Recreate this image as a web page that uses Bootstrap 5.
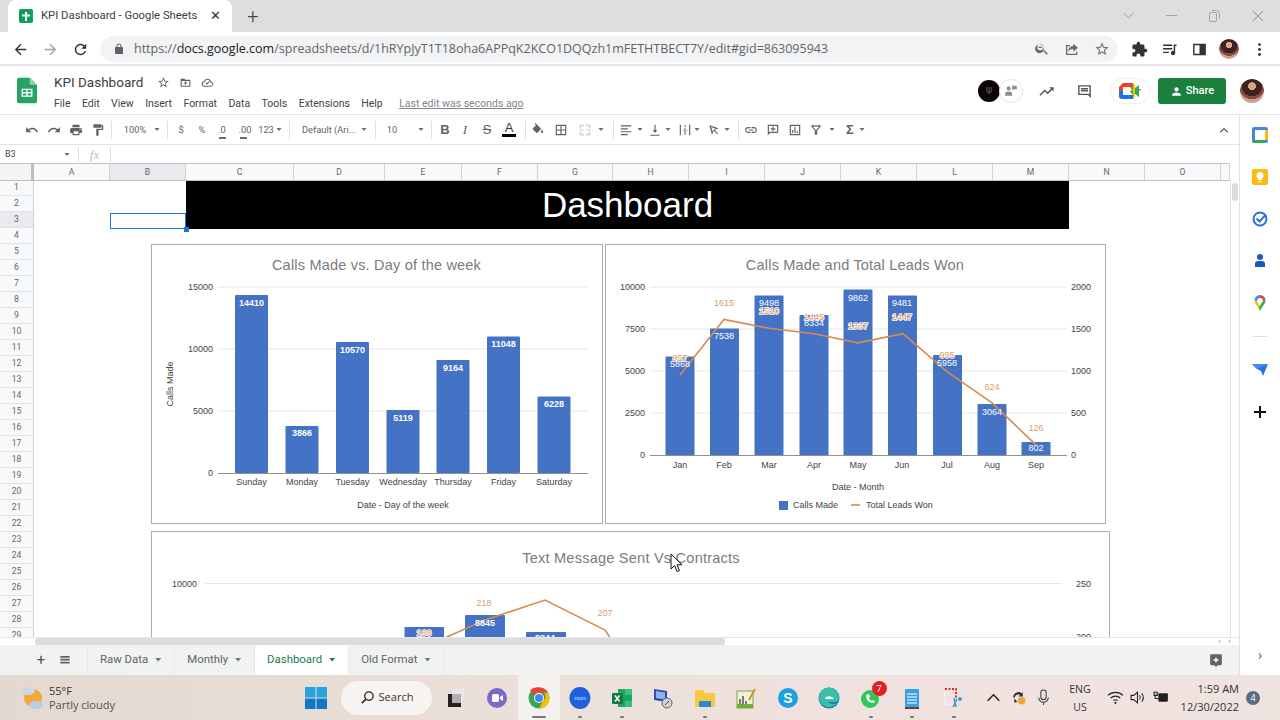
<!DOCTYPE html>
<html lang="en">
<head>
<meta charset="utf-8">
<title>KPI Dashboard - Google Sheets</title>
<link href="https://cdn.jsdelivr.net/npm/bootstrap@5.3.0/dist/css/bootstrap.min.css" rel="stylesheet">
<style>
html,body{height:720px;width:1280px;overflow:hidden;margin:0}
body{font-family:Roboto,"Liberation Sans",sans-serif;font-size:11px;color:#444;background:#fff;display:flex;flex-direction:column}
.defs-hold{width:0;height:0;position:absolute}
.ic{width:14px;height:14px;fill:#5f6368;flex:none}
.strip{height:32px;background:#dedede;flex:none}
.chrome-tab{width:224px;height:32px;margin-left:8px;background:#fff;border-radius:8px 8px 0 0;font-family:Roboto,"Liberation Sans",sans-serif;font-size:11.3px;color:#3c4043;padding-left:11px}
.tab-title{margin-left:8px;white-space:nowrap}
.tab-x{margin-left:auto;margin-right:11px;font-size:13px;color:#333}
.new-tab{width:42px;font-size:20px;font-weight:300;color:#444;text-align:center;line-height:1}
.winbar{padding-right:1px}
.winbtn{width:43px;color:#9a9a9a;text-align:center}
.addr{height:34px;flex:none;background:#fff;border-bottom:2px solid #e3e5e8;padding-top:2px}
.navs{padding-left:5px}
.navbtn{width:30px;display:flex;justify-content:center}
.navbtn .ic,.extbtn .ic{width:17px;height:17px;fill:#333}
.navbtn .fwd{fill:#a0a4a8}
.omni{width:1018px;margin-left:5px;height:26px;background:#f1f3f4;border-radius:13px;padding:0 8px 0 13px;font-family:"Open Sans","Liberation Sans",sans-serif;font-size:12.5px;color:#60646a}
.omni b{font-weight:400;color:#202124}
.omni .ic{width:12px;height:12px}
.url{margin-left:9px;white-space:nowrap}
.omni-ics{margin-left:auto;gap:14px;display:flex}
.omni-ics .ic{width:16px;height:16px;fill:#6a6e73}
.exts{margin-left:6px}
.extbtn{width:30px;display:flex;justify-content:center}
.ava{width:20px;height:20px;border-radius:50%;background:radial-gradient(circle at 50% 30%,#d9a58b 0 18%,#3b2320 20% 48%,#8d4b3e 50% 62%,#caa08f 64%)}
.ava-l{width:24px;height:24px}
.sh-head{height:49px;flex:none;border-bottom:1px solid #e4e6e8;position:relative}
.sh-logo{width:20px;height:27px;margin-left:17px;margin-top:11px;flex:none}
.sh-mid{margin-left:17px;margin-top:6px}
.sh-title{font-size:13.5px;color:#3c4043;line-height:20px;white-space:nowrap}
.sh-title .ic{width:13px;height:13px;margin-left:9px}
.sh-title .first{margin-left:14px}
.sh-menu{gap:11.4px;margin-top:5px;line-height:14px;font-size:10.5px;white-space:nowrap}
.lastedit{margin-left:5px;color:#80868b;text-decoration:underline}
.sh-right{margin-left:auto;padding-right:16px;padding-top:2px}
.pic-a{width:22px;height:22px;border-radius:50%;background:#0c0505;color:#665;font-size:9px;text-align:center;line-height:22px}
.pic-b{width:24px;height:24px;border-radius:50%;background:#fff;border:1px solid #e3e3e3;margin-left:-1px;display:flex;align-items:center;justify-content:center}
.pic-b svg{width:14px;height:14px;fill:#8c8c8c}
.trend{margin-left:15px}
.hd-ic{width:17px;height:17px;fill:#555}
.cmt{margin-left:21px}
.meet{width:40px;height:26px;border-radius:13px;border:1px solid #eceff1;margin-left:17px;display:flex;align-items:center;justify-content:center}
.btn.share{background:#1b7f3e;border:0;color:#fff;height:26px;width:68px;padding:0;margin-left:8px;font-size:11px;font-weight:500;border-radius:3px}
.btn.share .ic{width:13px;height:13px;fill:#fff;margin-right:3px}
.ava-r{margin-left:14px}
.work{height:560px;flex:none}
.work-l{width:1239px;display:flex;flex-direction:column}
.side{width:41px;border-left:1px solid #e2e3e5;padding-top:12px;gap:26px;display:flex;flex-direction:column;align-items:center}
.side svg{width:16px;height:16px;flex:none}
.side-sep{width:14px;height:1px;background:#dadce0;margin:-1px 0}
.side-next{margin-top:auto;margin-bottom:13px;color:#5f6368;font-size:14px;line-height:14px}
.tools{height:30px;flex:none;border-bottom:1px solid #e2e3e5;padding-left:25px;font-size:9.3px;color:#5f6368}
.tools .ic{display:block}
.tt{flex:none;text-align:center;white-space:nowrap}
.w8{width:8px}.w10{width:10px}.w12{width:12px}.w16{width:16px}.w24{width:24px}.w56{width:56px}
.tc{width:8px;height:4px;flex:none;background:#6a6e73;clip-path:polygon(1px 0,7px 0,4px 3.5px)}
.ts{width:1px;height:18px;background:#dfe1e3;flex:none}
.dec{position:relative}
.dec::after{content:"";position:absolute;left:3px;bottom:-3px;width:7px;height:2px;background:#6a6e73}
.tb-l{font-family:"Liberation Serif",serif;font-size:13px;font-weight:700;color:#5f6368;width:14px;text-align:center;flex:none;line-height:14px}
.t-b{font-family:"Liberation Sans",sans-serif}
.t-i{font-style:italic;font-weight:400}
.t-s{text-decoration:line-through;font-weight:400;font-family:"Liberation Sans",sans-serif}
.t-a{font-family:"Liberation Sans",sans-serif;font-weight:400;border-bottom:3px solid #000;line-height:11px;height:15px;color:#333}
.dim{fill:#c4c7ca}
.m1{margin-left:1px}.m2{margin-left:2px}.m3{margin-left:3px}.m4{margin-left:4px}.m5{margin-left:5px}.m6{margin-left:6px}.m7{margin-left:7px}.m8{margin-left:8px}.m9{margin-left:9px}.m10{margin-left:10px}.m11{margin-left:11px}.m12{margin-left:12px}.m19{margin-left:19px}
.collapse-ic{margin-left:auto;margin-right:8px}
.fx-bar{height:18px;flex:none;font-size:9px;color:#444;padding-top:1px}
.nm{width:79px;padding-left:5px;display:flex;align-items:center;justify-content:space-between;padding-right:7px;border-right:1px solid #dadce0;height:14px}
.fx{width:32px;font-family:"Liberation Serif",serif;font-style:italic;font-size:13px;color:#c0c2c4;text-align:center;border-right:1px solid #dadce0;height:14px;line-height:13px}
.cols{height:18px;flex:none;display:grid;grid-template-columns:34px 76px 76px 108px 91px 77px 76px 75px repeat(8,76px) 9px;background:#f8f9fa;border-top:1px solid #c4c7c5;border-bottom:1px solid #c0c0c0;width:1230px;font-size:8.6px;color:#666}
.cols>div{border-right:1px solid #cfd1d3;text-align:center;line-height:16px}
.cols>.corner{border-right:3px solid #bdbdbd;background:#f3f4f5}
.cols>.cur{background:#e8eaed}
.sheet-wrap{height:456px;flex:none}
.rownums{width:34px;flex:none;background:#f8f9fa;border-right:1px solid #cfd1d3;overflow:hidden;font-size:8.6px;color:#666;display:flex;flex-direction:column}
.rownums div{height:16px;flex:none;text-align:center;line-height:14px;border-bottom:1px solid #e1e3e5}
.rownums div:first-child{margin-top:-1px}
.rownums .cur{background:#e8eaed}
.canvas{width:1196px;flex:none;position:relative;overflow:hidden;background:#fff}
.vscroll{width:9px;flex:none;background:#fff;border-left:1px solid #e1e3e5;padding:2px 1px}
.vthumb{height:18px;background:#dadce0;border-radius:3px}
.banner{position:absolute;left:152px;top:0;width:883px;height:48px;background:#000;color:#fff;font-family:"Liberation Sans",sans-serif;font-size:35px;text-align:center;line-height:47px}
.sel{position:absolute;left:76px;top:32px;width:76px;height:16px;border:1px solid #1a73e8}
.sel-h{position:absolute;left:150px;top:46px;width:5px;height:5px;background:#1a73e8}
.obj{position:absolute;font-family:"Liberation Sans",sans-serif}
.obj1{left:117px;top:63px;width:452px;height:280px}
.obj2{left:571px;top:63px;width:501px;height:280px}
.obj3{left:117px;top:350px;width:960px;height:280px}
.frame{fill:#fff;stroke:#aeaeae}
.ct{font-size:14.5px;fill:#7b7b7b;text-anchor:middle;letter-spacing:.2px}
.ctl{font-size:14.6px}
.ax{font-size:9px;fill:#444}
.axm{text-anchor:middle}
.axe{text-anchor:end}
.vl{font-size:9px;font-weight:700;fill:#fff;text-anchor:middle}
.val-thin{font-weight:400}
.vo{font-size:9px;fill:#e29a5f;text-anchor:middle}
.hl{paint-order:stroke;stroke:#fff;stroke-width:1.6px}
.gl{stroke:#e6e7e9;stroke-width:1}
.base{stroke:#8f8f8f;stroke-width:1}
.bar{fill:#4472c4}
.ln{fill:none;stroke:#d88b4f;stroke-width:1.6}
.cursor{position:absolute;left:636px;top:372px;width:13px;height:20px}
.hbar{height:8px;flex:none;background:#fff;border-top:1px solid #e6e7e8;width:1239px}
.hthumb{width:690px;margin-left:35px;height:7px;background:#dadce0;border-radius:3px}
.harr{margin-left:auto;font-size:8px;color:#777;line-height:7px;padding-right:8px;gap:8px;display:flex}
.tabsbar{height:30px;flex:none;background:#f1f3f3;font-size:11.4px;color:#5f6368}
.plus{width:14px;margin-left:34px;font-size:15px;color:#555;text-align:center;line-height:1}
.allsheets{margin-left:10px;margin-right:15px}
.stab{height:30px;display:flex;align-items:center;gap:6px;padding:0 12px;border-right:1px solid #e7e9e9;white-space:nowrap}
.stab .tc{background:#777}
.stab-on{background:#fff;color:#1b7f4e}
.stab-on .tc{background:#1b7f4e}
.rawtab{border-left:1px solid #e7e9e9}
.explore{margin-left:auto;margin-right:16px}
.taskbar{height:45px;flex:none;background:linear-gradient(90deg,#e3d9d0 0,#ebe1da 45%,#f1e2df 70%,#efe3e0 100%);font-family:"Open Sans","Liberation Sans",sans-serif;font-size:11px;color:#333}
.wx{width:305px;padding-left:19px;gap:5px;flex:none}
.wx svg{width:25px;height:28px}
.wx p{margin:0;line-height:14px}
.wx .muted{color:#555}
.start{width:22px;height:22px;flex:none}
.srch{width:91px;height:34px;margin-left:14px;margin-right:3px;background:#f8f4f1;border-radius:17px;gap:4px;font-size:11px;justify-content:center}
.srch svg{width:15px;height:15px}
.tbi{width:41.5px;height:45px;flex:none;position:relative;display:flex;align-items:center;justify-content:center}
.tbi svg{width:22px;height:22px}
.run::after{content:"";position:absolute;bottom:2px;left:50%;margin-left:-2px;width:4px;height:2px;border-radius:1px;background:#777}
.active-app{background:#f5f1ee;border-radius:3px}
.active-app::after{margin-left:-7px;width:14px}
.bdg{position:absolute;top:6px;right:5px;width:15px;height:15px;border-radius:50%;background:#e01f26;color:#fff;font-size:9.5px;line-height:15px;text-align:center}
.tray{margin-left:auto;gap:0;padding-right:20px}
.tr-i{flex:none;display:flex;justify-content:center}
.tr-i svg{width:17px;height:17px}
.spk{margin-left:5px}
.bat{margin-left:7px}
.lang{width:36px;text-align:center;line-height:18px;font-size:10.6px;margin-left:10px;margin-right:9px}
.clock{width:60px;text-align:right;line-height:18px;font-size:11px;margin-left:9px;white-space:nowrap}
.notif{width:14px;height:14px;border-radius:50%;background:#5b6d7e;color:#fff;font-size:9px;text-align:center;line-height:14px;margin-left:7px;flex:none}
</style>
</head>
<body>
<svg class="defs-hold" aria-hidden="true">
<symbol id="i-back" viewBox="0 0 24 24"><path d="M20 11H7.830l5.590-5.590L12 4l-8 8 8 8 1.410-1.410L7.830 13H20v-2z"/></symbol>
<symbol id="i-reload" viewBox="0 0 24 24"><path d="M17.650 6.350C16.200 4.900 14.210 4 12 4c-4.420 0-7.990 3.580-7.990 8s3.570 8 7.990 8c3.730 0 6.840-2.550 7.730-6h-2.080c-.82 2.330-3.040 4-5.650 4-3.310 0-6-2.690-6-6s2.690-6 6-6c1.660 0 3.140.69 4.220 1.780L13 11h7V4l-2.350 2.350z"/></symbol>
<symbol id="i-lock" viewBox="0 0 24 24"><path d="M18 8h-1V6c0-2.760-2.240-5-5-5S7 3.240 7 6v2H6c-1.100 0-2 .9-2 2v10c0 1.100.9 2 2 2h12c1.100 0 2-.9 2-2V10c0-1.100-.9-2-2-2zM9 6c0-1.660 1.340-3 3-3s3 1.340 3 3v2H9V6z"/></symbol>
<symbol id="i-star" viewBox="0 0 24 24"><path d="M22 9.240l-7.190-.62L12 2 9.190 8.630 2 9.240l5.460 4.730L5.820 21 12 17.270 18.180 21l-1.630-7.030L22 9.240zM12 15.400l-3.760 2.270 1-4.280-3.320-2.880 4.380-.38L12 6.100l1.710 4.040 4.380.38-3.320 2.880 1 4.280L12 15.400z"/></symbol>
<symbol id="i-ext" viewBox="0 0 24 24"><path d="M20.500 11H19V7c0-1.100-.9-2-2-2h-4V3.500C13 2.120 11.880 1 10.500 1S8 2.120 8 3.500V5H4c-1.100 0-1.990.9-1.990 2v3.800H3.500c1.490 0 2.700 1.210 2.700 2.700s-1.210 2.700-2.700 2.700H2V20c0 1.100.9 2 2 2h3.800v-1.500c0-1.490 1.210-2.700 2.700-2.700 1.490 0 2.700 1.210 2.700 2.700V22H17c1.100 0 2-.9 2-2v-4h1.500c1.380 0 2.500-1.120 2.500-2.500S21.880 11 20.500 11z"/></symbol>
<symbol id="i-undo" viewBox="0 0 24 24"><path d="M12.500 8c-2.650 0-5.050.99-6.900 2.600L2 7v9h9l-3.620-3.620c1.390-1.160 3.160-1.880 5.120-1.880 3.540 0 6.550 2.310 7.600 5.500l2.370-.78C21.080 11.030 17.150 8 12.500 8z"/></symbol>
<symbol id="i-redo" viewBox="0 0 24 24"><path d="M18.400 10.600C16.550 8.990 14.150 8 11.500 8c-4.650 0-8.580 3.030-9.960 7.220L3.900 16c1.050-3.190 4.050-5.500 7.600-5.500 1.950 0 3.730.72 5.120 1.880L13 16h9V7l-3.600 3.600z"/></symbol>
<symbol id="i-print" viewBox="0 0 24 24"><path d="M19 8H5c-1.660 0-3 1.340-3 3v6h4v4h12v-4h4v-6c0-1.660-1.340-3-3-3zm-3 11H8v-5h8v5zm3-7c-.55 0-1-.45-1-1s.45-1 1-1 1 .45 1 1-.45 1-1 1zm-1-9H6v4h12V3z"/></symbol>
<symbol id="i-paint" viewBox="0 0 24 24"><path d="M18 4V3c0-.55-.45-1-1-1H5c-.55 0-1 .45-1 1v4c0 .55.45 1 1 1h12c.55 0 1-.45 1-1V6h1v4H9v11c0 .55.45 1 1 1h2c.55 0 1-.45 1-1v-9h8V4h-3z"/></symbol>
<symbol id="i-link" viewBox="0 0 24 24"><path d="M3.900 12c0-1.710 1.390-3.100 3.100-3.100h4V7H7c-2.760 0-5 2.240-5 5s2.240 5 5 5h4v-1.900H7c-1.710 0-3.100-1.390-3.100-3.100zM8 13h8v-2H8v2zm9-6h-4v1.900h4c1.710 0 3.100 1.390 3.100 3.100s-1.390 3.100-3.100 3.100h-4V17h4c2.760 0 5-2.240 5-5s-2.240-5-5-5z"/></symbol>
<symbol id="i-person" viewBox="0 0 24 24"><path d="M12 12c2.210 0 4-1.790 4-4s-1.790-4-4-4-4 1.790-4 4 1.790 4 4 4zm0 2c-2.670 0-8 1.340-8 4v2h16v-2c0-2.660-5.330-4-8-4z"/></symbol>
<symbol id="i-trend" viewBox="0 0 24 24"><path d="M16 6l2.290 2.290-4.880 4.880-4-4L2 16.590 3.410 18l6-6 4 4 6.300-6.290L22 12V6z"/></symbol>
<symbol id="i-comment" viewBox="0 0 24 24"><path d="M3 3h18v18l-4-4H3V3zm2 2v10h13l1 1V5H5zm2 2h10v2H7V7zm0 3h10v2H7v-2z"/></symbol>
<symbol id="i-cmtplus" viewBox="0 0 24 24"><path d="M3 3h18v14H7l-4 4V3zm2 2v11l1-1h13V5H5zm6 1h2v3h3v2h-3v3h-2v-3H8V9h3V6z"/></symbol>
<symbol id="i-chart" viewBox="0 0 24 24"><path d="M3 3h18v18H3V3zm2 2v14h14V5H5zm2 7h2v5H7v-5zm4-5h2v10h-2V7zm4 7h2v3h-2v-3z"/></symbol>
<symbol id="i-filter" viewBox="0 0 24 24"><path d="M4 4h16v2l-6 7v7h-4v-7L4 6V4zm2.600 2L12 12.300 17.400 6H6.600z"/></symbol>
<symbol id="i-fill" viewBox="0 0 24 24"><path d="M16.560 8.940 7.620 0 6.210 1.410l2.380 2.380-5.150 5.150c-.59.59-.59 1.540 0 2.120l5.500 5.500c.29.29.68.44 1.060.44s.77-.15 1.060-.44l5.500-5.500c.59-.58.59-1.530 0-2.120zM19 11.500s-2 2.170-2 3.500c0 1.100.9 2 2 2s2-.9 2-2c0-1.330-2-3.500-2-3.500z"/></symbol>
<symbol id="i-border" viewBox="0 0 24 24"><path d="M3 3h18v18H3V3zm2 2v6h6V5H5zm8 0v6h6V5h-6zm-8 8v6h6v-6H5zm8 0v6h6v-6h-6z"/></symbol>
<symbol id="i-merge" viewBox="0 0 24 24"><path d="M3 3h7v2H5v4H3V3zm11 0h7v6h-2V5h-5V3zM3 15h2v4h5v2H3v-6zm16 0h2v6h-7v-2h5v-4zM3 11h6v2H3v-2zm12 0h6v2h-6v-2z"/></symbol>
<symbol id="i-align" viewBox="0 0 24 24"><path d="M3 4h18v2H3V4zm0 5h12v2H3V9zm0 5h18v2H3v-2zm0 5h12v2H3v-2z"/></symbol>
<symbol id="i-valign" viewBox="0 0 24 24"><path d="M4 20h16v2H4v-2zM13 3v9h3l-4 5-4-5h3V3h2z"/></symbol>
<symbol id="i-wrap" viewBox="0 0 24 24"><path d="M3 3h2v18H3V3zm16 0h2v18h-2V3zM11 4h2v3h-2V4zm0 5h2v3h-2V9zm0 5h2v6h-2v-6zm-3-2h8v1H8v-1z"/></symbol>
<symbol id="i-rot" viewBox="0 0 24 24"><path d="M4 4l16 5-7 3 6 6-1.400 1.400-6-6-3 7L4 4zm3 3 3 8 1.400-3.400L15 10 7 7z"/></symbol>
<symbol id="i-expl" viewBox="0 0 24 24"><path d="M4 2h16c1 0 2 1 2 2v15c0 1-1 2-2 2h-5l-3 3-3-3H4c-1 0-2-1-2-2V4c0-1 1-2 2-2zm8 4-1.600 4.400L6 12l4.400 1.600L12 18l1.600-4.400L18 12l-4.400-1.600L12 6z"/></symbol>
</svg>

<div class="strip d-flex align-items-center">
  <div class="chrome-tab d-flex align-items-center">
    <svg width="14" height="14" viewBox="0 0 14 14"><rect width="14" height="14" rx="2" fill="#0f9d58"/><path d="M6 3h2v2.500h3v2H8V12H6V7.500H3v-2h3z" fill="#fff"/></svg>
    <span class="tab-title">KPI Dashboard - Google Sheets</span>
    <span class="tab-x">✕</span>
  </div>
  <div class="new-tab">+</div>
  <div class="ms-auto d-flex align-items-center winbar">
    <div class="winbtn"><svg width="11" height="7" viewBox="0 0 11 7"><path d="M1 1l4.500 5 4.500-5" fill="none" stroke="#a4a4a4"/></svg></div>
    <div class="winbtn"><svg width="11" height="3" viewBox="0 0 11 3"><path d="M0 1.500h11" stroke="#a4a4a4"/></svg></div>
    <div class="winbtn"><svg width="11" height="12" viewBox="0 0 11 12"><rect x=".5" y="2.500" width="7" height="9" rx="1.500" fill="none" stroke="#a4a4a4"/><path d="M3 .5h4.500q3 0 3 3V9" fill="none" stroke="#a4a4a4"/></svg></div>
    <div class="winbtn"><svg width="12" height="12" viewBox="0 0 12 12"><path d="M1 1l10 10M11 1L1 11" stroke="#8e8e8e"/></svg></div>
  </div>
</div>

<div class="addr d-flex align-items-center">
  <div class="d-flex align-items-center navs">
    <div class="navbtn"><svg class="ic"><use href="#i-back"/></svg></div>
    <div class="navbtn"><svg class="ic fwd" viewBox="0 0 24 24"><path d="M4 11h12.170l-5.590-5.590L12 4l8 8-8 8-1.410-1.410L16.170 13H4v-2z"/></svg></div>
    <div class="navbtn"><svg class="ic"><use href="#i-reload"/></svg></div>
  </div>
  <div class="omni d-flex align-items-center">
    <svg class="ic"><use href="#i-lock"/></svg>
    <span class="url">https://<b>docs.google.com</b>/spreadsheets/d/1hRYpJyT1T18oha6APPqK2KCO1DQQzh1mFETHTBECT7Y/edit#gid=863095943</span>
    <span class="omni-ics">
      <svg class="ic" viewBox="0 0 24 24"><path d="M15.500 14h-.8l-.3-.3A6.500 6.500 0 1 0 14 14.700l.3.3v.8l5 5 1.500-1.500-5-5zm-6 0a4.500 4.500 0 1 1 0-9 4.500 4.500 0 0 1 0 9zM7 8.500h5v2H7z"/></svg>
      <svg class="ic" viewBox="0 0 24 24"><path d="M14 4l7 6-7 6v-4c-4 0-6 1-8 4 0-5 3-8 8-9V4zM3 6h6v2H5v11h13v-3h2v5H3V6z"/></svg>
      <svg class="ic"><use href="#i-star"/></svg>
    </span>
  </div>
  <div class="d-flex align-items-center exts">
    <div class="extbtn"><svg class="ic"><use href="#i-ext"/></svg></div>
    <div class="extbtn"><svg class="ic" viewBox="0 0 24 24"><path d="M3 5h13v2H3zm0 5h13v2H3zm0 5h8v2H3zm15-10h4v2h-2v10a3 3 0 1 1-2-2.800z"/></svg></div>
    <div class="extbtn"><svg class="ic" viewBox="0 0 24 24"><path d="M3 4h18v16H3V4zm2 2v12h7V6H5z"/></svg></div>
    <div class="extbtn"><div class="ava"></div></div>
    <div class="extbtn"><svg class="ic" viewBox="0 0 24 24"><circle cx="12" cy="5" r="2"/><circle cx="12" cy="12" r="2"/><circle cx="12" cy="19" r="2"/></svg></div>
  </div>
</div>

<div class="sh-head d-flex">
  <svg class="sh-logo" viewBox="0 0 22 28"><path d="M2 0h12l8 8v18a2 2 0 0 1-2 2H2a2 2 0 0 1-2-2V2a2 2 0 0 1 2-2z" fill="#23a566"/><path d="M14 0l8 8h-6a2 2 0 0 1-2-2z" fill="#8ed1b1"/><path d="M5 12h12v9H5zm1.500 1.500v2.200h3.700v-2.200zm5.300 0v2.200h3.700v-2.200zm-5.300 3.800v2.200h3.700v-2.200zm5.300 0v2.200h3.700v-2.200z" fill="#fff"/></svg>
  <div class="sh-mid">
    <div class="sh-title d-flex align-items-center">KPI Dashboard
      <svg class="ic first"><use href="#i-star"/></svg>
      <svg class="ic" viewBox="0 0 24 24"><path d="M3 5h7l2 2h9v13H3V5zm2 4v9h14V9H5zm6 1h2v2h2v2h-2v2h-2v-2H9v-2h2z"/></svg>
      <svg class="ic" viewBox="0 0 24 24"><path d="M12 5a7 7 0 0 1 6.700 5.100A5 5 0 0 1 18 20H6.500a5.500 5.500 0 0 1-.8-10.900A7 7 0 0 1 12 5zm0 2a5 5 0 0 0-4.600 3L7 11l-1 .1A3.500 3.500 0 0 0 6.500 18H18a3 3 0 0 0 .3-6l-1.200-.2-.3-1.100A5 5 0 0 0 12 7zm2.500 2.800L16 11.200 11 16l-3-3 1.400-1.400 1.600 1.600z"/></svg>
    </div>
    <div class="sh-menu d-flex">
      <span>File</span><span>Edit</span><span>View</span><span>Insert</span><span>Format</span><span>Data</span><span>Tools</span><span>Extensions</span><span>Help</span>
      <span class="lastedit">Last edit was seconds ago</span>
    </div>
  </div>
  <div class="sh-right d-flex align-items-center">
    <div class="pic-a">Ψ</div>
    <div class="pic-b"><svg viewBox="0 0 24 24"><path d="M8 11a3.500 3.500 0 1 0 0-7 3.500 3.500 0 0 0 0 7zm0 2c-3 0-6 1.500-6 4v3h12v-3c0-2.500-3-4-6-4zM14 3h8v6h-5l-2 2v-2h-1z"/></svg></div>
    <svg class="hd-ic trend"><use href="#i-trend"/></svg>
    <svg class="hd-ic cmt"><use href="#i-comment"/></svg>
    <div class="meet"><svg width="22" height="16" viewBox="0 0 22 16"><path d="M0 4l4-4h10v4H4v4H0z" fill="#ea4335"/><path d="M0 8h4v4h10v4H3a3 3 0 0 1-3-3z" fill="#1a73e8"/><path d="M4 0h10v4l-3 4 3 4v4l2-2V3a3 3 0 0 0-3-3z" fill="#fbbc04"/><path d="M14 8l-3-4h3zM14 8v4l-3-4zM16 5l4-3v12l-4-3z" fill="#34a853"/><path d="M20 6h2l-1 2z" fill="#5f6368"/></svg></div>
    <button class="btn share d-flex align-items-center justify-content-center" type="button"><svg class="ic"><use href="#i-person"/></svg>Share</button>
    <div class="ava ava-l ava-r"></div>
  </div>
</div>

<div class="work d-flex">
  <div class="work-l">
    <div class="tools d-flex align-items-center">
      <svg class="ic"><use href="#i-undo"/></svg>
      <svg class="ic m8"><use href="#i-redo"/></svg>
      <svg class="ic m8"><use href="#i-print"/></svg>
      <svg class="ic m8"><use href="#i-paint"/></svg>
      <span class="ts m6"></span>
      <span class="tt w24 m11">100%</span><span class="tc m6"></span>
      <span class="ts m6"></span>
      <span class="tt w8 m9">$</span>
      <span class="tt w10 m12">%</span>
      <span class="tt w12 m9 dec">.0</span>
      <span class="tt w16 m9 dec">.00</span>
      <span class="tt w16 m5">123</span><span class="tc m1"></span>
      <span class="ts m6"></span>
      <span class="tt w56 m11">Default (Ari...</span><span class="tc m3"></span>
      <span class="ts m7"></span>
      <span class="tt w12 m10">10</span><span class="tc m19"></span>
      <span class="ts m6"></span>
      <span class="tb-l t-b m6">B</span>
      <span class="tb-l t-i m6">I</span>
      <span class="tb-l t-s m8">S</span>
      <span class="tb-l t-a m8">A</span>
      <span class="ts m9"></span>
      <svg class="ic m5"><use href="#i-fill"/></svg>
      <svg class="ic m9"><use href="#i-border"/></svg>
      <svg class="ic dim m10"><use href="#i-merge"/></svg><span class="tc m5"></span>
      <span class="ts m8"></span>
      <svg class="ic m5"><use href="#i-align"/></svg><span class="tc m3"></span>
      <svg class="ic m4"><use href="#i-valign"/></svg><span class="tc m2"></span>
      <svg class="ic m6"><use href="#i-wrap"/></svg><span class="tc m1"></span>
      <svg class="ic m6"><use href="#i-rot"/></svg><span class="tc m2"></span>
      <span class="ts m7"></span>
      <svg class="ic m5"><use href="#i-link"/></svg>
      <svg class="ic m8"><use href="#i-cmtplus"/></svg>
      <svg class="ic m8"><use href="#i-chart"/></svg>
      <svg class="ic m7"><use href="#i-filter"/></svg><span class="tc m5"></span>
      <span class="tb-l t-b m7">Σ</span><span class="tc m1"></span>
      <svg class="ic collapse-ic" viewBox="0 0 24 24"><path d="M12 8l-7 7 1.500 1.500L12 11l5.500 5.500L19 15z"/></svg>
    </div>
    <div class="fx-bar d-flex align-items-center">
      <div class="nm"><span>B3</span><span class="tc"></span></div>
      <div class="fx">fx</div>
    </div>
    <div class="cols">
      <div class="corner"></div><div>A</div><div class="cur">B</div><div>C</div><div>D</div><div>E</div><div>F</div><div>G</div><div>H</div><div>I</div><div>J</div><div>K</div><div>L</div><div>M</div><div>N</div><div>O</div><div></div>
    </div>
    <div class="sheet-wrap d-flex">
      <div class="rownums">
        <div>1</div><div>2</div><div class="cur">3</div><div>4</div><div>5</div><div>6</div><div>7</div><div>8</div><div>9</div><div>10</div><div>11</div><div>12</div><div>13</div><div>14</div><div>15</div><div>16</div><div>17</div><div>18</div><div>19</div><div>20</div><div>21</div><div>22</div><div>23</div><div>24</div><div>25</div><div>26</div><div>27</div><div>28</div><div>29</div>
      </div>
      <div class="canvas">
        <div class="banner">Dashboard</div>
        <div class="sel"></div><div class="sel-h"></div>

        <svg class="obj obj1" viewBox="151 244 452 280">
          <rect class="frame" x="151.500" y="244.500" width="451" height="279"/>
          <text class="ct" x="376.500" y="270">Calls Made vs. Day of the week</text>
          <line class="gl" x1="218" x2="588" y1="287" y2="287"/><line class="gl" x1="218" x2="588" y1="349" y2="349"/><line class="gl" x1="218" x2="588" y1="411" y2="411"/>
          <text class="ax axe" x="213" y="290">15000</text><text class="ax axe" x="213" y="352">10000</text><text class="ax axe" x="213" y="414">5000</text><text class="ax axe" x="213" y="476">0</text>
          <text class="ax axm" transform="translate(173 384) rotate(-90)">Calls Made</text>
          <rect class="bar" x="235" y="295" width="33" height="178" rx="1"/>
          <rect class="bar" x="285.500" y="426" width="33" height="47" rx="1"/>
          <rect class="bar" x="336" y="342" width="33" height="131" rx="1"/>
          <rect class="bar" x="386.500" y="410" width="33" height="63" rx="1"/>
          <rect class="bar" x="436.500" y="360" width="33" height="113" rx="1"/>
          <rect class="bar" x="487" y="336.500" width="33" height="136.500" rx="1"/>
          <rect class="bar" x="537.500" y="396.500" width="33" height="76.500" rx="1"/>
          <line class="base" x1="218" x2="588" y1="473.500" y2="473.500"/>
          <text class="vl" x="251.500" y="306">14410</text><text class="vl" x="302" y="436">3866</text><text class="vl" x="352.500" y="353">10570</text><text class="vl" x="403" y="421">5119</text><text class="vl" x="453" y="371">9164</text><text class="vl" x="503.500" y="347">11048</text><text class="vl" x="554" y="407">6228</text>
          <text class="ax axm" x="251.500" y="485">Sunday</text><text class="ax axm" x="302" y="485">Monday</text><text class="ax axm" x="352.500" y="485">Tuesday</text><text class="ax axm" x="403" y="485">Wednesday</text><text class="ax axm" x="453" y="485">Thursday</text><text class="ax axm" x="503.500" y="485">Friday</text><text class="ax axm" x="554" y="485">Saturday</text>
          <text class="ax axm" x="403" y="508">Date - Day of the week</text>
        </svg>

        <svg class="obj obj2" viewBox="605 244 501 280">
          <rect class="frame" x="605.500" y="244.500" width="500" height="279"/>
          <text class="ct" x="855" y="270">Calls Made and Total Leads Won</text>
          <line class="gl" x1="650" x2="1067" y1="287" y2="287"/><line class="gl" x1="650" x2="1067" y1="329" y2="329"/><line class="gl" x1="650" x2="1067" y1="371" y2="371"/><line class="gl" x1="650" x2="1067" y1="413" y2="413"/>
          <text class="ax axe" x="645" y="290">10000</text><text class="ax axe" x="645" y="332">7500</text><text class="ax axe" x="645" y="374">5000</text><text class="ax axe" x="645" y="416">2500</text><text class="ax axe" x="645" y="458">0</text>
          <text class="ax" x="1071" y="290">2000</text><text class="ax" x="1071" y="332">1500</text><text class="ax" x="1071" y="374">1000</text><text class="ax" x="1071" y="416">500</text><text class="ax" x="1071" y="458">0</text>
          <rect class="bar" x="665.500" y="356.500" width="29" height="99" rx="1"/>
          <rect class="bar" x="710" y="328.500" width="29" height="127" rx="1"/>
          <rect class="bar" x="754.500" y="295.500" width="29" height="160" rx="1"/>
          <rect class="bar" x="799.500" y="315" width="29" height="140.500" rx="1"/>
          <rect class="bar" x="843.500" y="289.500" width="29" height="166" rx="1"/>
          <rect class="bar" x="888" y="295.500" width="29" height="160" rx="1"/>
          <rect class="bar" x="933" y="355" width="29" height="100.500" rx="1"/>
          <rect class="bar" x="977.500" y="404" width="29" height="51.500" rx="1"/>
          <rect class="bar" x="1021.500" y="442" width="29" height="13.500" rx="1"/>
          <line class="base" x1="650" x2="1067" y1="455.500" y2="455.500"/>
          <polyline class="ln" points="680,375 724,319.400 769,328.300 814,333.800 858,342.900 903,333.600 947,371.700 992,402.900 1036,444.900"/>
          <text class="vl val-thin" x="680" y="367">5868</text><text class="vl val-thin" x="724" y="339">7538</text><text class="vl val-thin" x="769" y="306">9498</text><text class="vl val-thin" x="814" y="326">8334</text><text class="vl val-thin" x="858" y="301">9862</text><text class="vl val-thin" x="902" y="306">9481</text><text class="vl val-thin" x="947" y="366">5958</text><text class="vl val-thin" x="992" y="415">3064</text><text class="vl val-thin" x="1036" y="451">802</text>
          <text class="vo hl" x="680" y="361">957</text><text class="vo" x="724" y="306">1615</text><text class="vo hl" x="769" y="314">1510</text><text class="vo hl" x="814" y="320">1445</text><text class="vo hl" x="858" y="329">1337</text><text class="vo hl" x="902" y="320">1447</text><text class="vo hl" x="947" y="358">995</text><text class="vo" x="992" y="390">624</text><text class="vo" x="1036" y="431">126</text>
          <text class="ax axm" x="680" y="468">Jan</text><text class="ax axm" x="724" y="468">Feb</text><text class="ax axm" x="769" y="468">Mar</text><text class="ax axm" x="814" y="468">Apr</text><text class="ax axm" x="858" y="468">May</text><text class="ax axm" x="902" y="468">Jun</text><text class="ax axm" x="947" y="468">Jul</text><text class="ax axm" x="992" y="468">Aug</text><text class="ax axm" x="1036" y="468">Sep</text>
          <text class="ax axm" x="858" y="490">Date - Month</text>
          <rect class="bar" x="779" y="501" width="9" height="9"/>
          <text class="ax" x="793" y="508">Calls Made</text>
          <line class="ln" x1="851" x2="860" y1="505" y2="505"/>
          <text class="ax" x="866" y="508">Total Leads Won</text>
        </svg>

        <svg class="obj obj3" viewBox="151 531 960 280">
          <rect class="frame" x="151.500" y="531.500" width="958" height="279"/>
          <text class="ct ctl" x="631" y="563">Text Message Sent Vs Contracts</text>
          <line class="gl" x1="205" x2="1062" y1="583.500" y2="583.500"/>
          <text class="ax axe" x="197" y="587">10000</text><text class="ax" x="1076" y="587">250</text><text class="ax" x="1076" y="640">200</text>
          <rect class="bar" x="404.500" y="627" width="39.500" height="60" rx="1"/>
          <rect class="bar" x="465" y="615" width="40" height="60" rx="1"/>
          <rect class="bar" x="526" y="632" width="40" height="60" rx="1"/>
          <polyline class="ln" points="440,640 485,620 545,600 605,630 615,645"/>
          <text class="vl" x="485" y="626">8845</text><text class="vl" x="545" y="641">8244</text>
          <text class="vo hl" x="424" y="636">189</text><text class="vo" x="484" y="606">218</text><text class="vo" x="605" y="616">207</text>
        </svg>

        <svg class="cursor" viewBox="0 0 13 20"><path d="M1 1v15l3.600-3.400 2.500 6 2.400-1-2.500-5.800H12z" fill="#fff" stroke="#111"/></svg>
      </div>
      <div class="vscroll"><div class="vthumb"></div></div>
    </div>
    <div class="hbar d-flex">
      <div class="hthumb"></div>
      <div class="harr"><span>‹</span><span>›</span></div>
    </div>
    <div class="tabsbar d-flex align-items-center">
      <span class="plus">+</span>
      <svg class="ic allsheets" viewBox="0 0 24 24"><path d="M4 5h16v3H4zm0 5h16v3H4zm0 5h16v3H4z"/></svg>
      <div class="stab rawtab">Raw Data<span class="tc"></span></div>
      <div class="stab">Monthly<span class="tc"></span></div>
      <div class="stab stab-on">Dashboard<span class="tc"></span></div>
      <div class="stab">Old Format<span class="tc"></span></div>
      <svg class="ic explore"><use href="#i-expl"/></svg>
    </div>
  </div>
  <div class="side">
    <svg viewBox="0 0 16 16"><rect width="16" height="16" rx="2" fill="#4285f4"/><rect x="3" y="3" width="10" height="10" fill="#fff"/><path d="M0 13h13v3H2a2 2 0 0 1-2-2z" fill="#34a853"/><path d="M13 3h3v10h-3z" fill="#fbbc04"/></svg>
    <svg viewBox="0 0 16 16"><rect width="16" height="16" rx="2" fill="#f9bc15"/><path d="M8 3a3.500 3.500 0 0 1 2 6.400V11H6V9.400A3.500 3.500 0 0 1 8 3zM6.500 12h3v1h-3z" fill="#fff"/></svg>
    <svg viewBox="0 0 16 16"><circle cx="8" cy="8" r="6.500" fill="none" stroke="#2a6fdb" stroke-width="2"/><path d="M4.500 7.500l3 3L14 3.500" fill="none" stroke="#2a6fdb" stroke-width="2"/></svg>
    <svg viewBox="0 0 16 16"><circle cx="8" cy="4" r="3" fill="#1a56c4"/><path d="M3 14v-3q0-3 3-3h4q3 0 3 3v3z" fill="#1a56c4"/></svg>
    <svg viewBox="0 0 16 16"><path d="M8 0a5.500 5.500 0 0 1 5.500 5.500L11 6A3 3 0 0 0 8 3z" fill="#ea4335"/><path d="M8 0a5.500 5.500 0 0 0-5.500 5.500L5 6a3 3 0 0 1 3-3z" fill="#4285f4"/><path d="M2.500 5.500c0 3 3 5 5.500 10.500l1-2-4-8z" fill="#fbbc04"/><path d="M13.500 5.500c0 3-3 5-5.500 10.500l-1-4 4-6z" fill="#34a853"/></svg>
    <div class="side-sep"></div>
    <svg viewBox="0 0 16 16"><path d="M0 2h16l-5 12-2-5-4-2z" fill="#2f6fdc"/><path d="M0 2h16L5 7z" fill="#4a8af0"/></svg>
    <svg viewBox="0 0 16 16"><path d="M7 2h2v5h5v2H9v5H7V9H2V7h5z" fill="#111"/></svg>
    <div class="side-next">›</div>
  </div>
</div>

<div class="taskbar d-flex align-items-center">
  <div class="wx d-flex align-items-center">
    <svg viewBox="0 0 25 28"><circle cx="14" cy="14" r="9" fill="#f2a93b"/><ellipse cx="9" cy="7" rx="7" ry="4" fill="#cfd6e4"/><ellipse cx="17" cy="21" rx="7" ry="4" fill="#b9cde6"/></svg>
    <div><p>55°F</p><p class="muted">Partly cloudy</p></div>
  </div>
  <svg class="start" viewBox="0 0 22 22"><rect width="10.500" height="10.500" fill="#2aa3e3"/><rect x="11.500" width="10.500" height="10.500" fill="#2aa3e3"/><rect y="11.500" width="10.500" height="10.500" fill="#0f78c8"/><rect x="11.500" y="11.500" width="10.500" height="10.500" fill="#0f78c8"/></svg>
  <div class="srch d-flex align-items-center">
    <svg viewBox="0 0 16 16"><circle cx="9.500" cy="6.500" r="4.500" fill="none" stroke="#222" stroke-width="1.400"/><path d="M6 10l-4 4" stroke="#222" stroke-width="1.600"/></svg>Search
  </div>
  <div class="tbi"><svg viewBox="0 0 22 22"><rect x="7" y="2" width="12" height="12" fill="#e8e6e6"/><rect x="3" y="7" width="13" height="13" fill="#222"/><rect x="7" y="7" width="9" height="9" fill="#b0b0b0"/></svg></div>
  <div class="tbi"><svg viewBox="0 0 22 22"><circle cx="11" cy="11" r="10" fill="#7b68c9"/><rect x="6" y="7" width="7" height="8" rx="1.500" fill="#fff"/><path d="M14 10l3-2v6l-3-2z" fill="#fff"/></svg></div>
  <div class="tbi run active-app"><svg viewBox="0 0 22 22"><circle cx="11" cy="11" r="10.500" fill="#34a853"/><path d="M11 .5a10.500 10.500 0 0 1 9.100 5.250H11a5.250 5.250 0 0 0-4.800 3.200L2 3.500A10.500 10.500 0 0 1 11 .5z" fill="#ea4335"/><path d="M20.100 5.750A10.500 10.500 0 0 1 11 21.500l4.500-7.900a5.250 5.250 0 0 0 .5-7.850z" fill="#fbbc04"/><circle cx="11" cy="11" r="5" fill="#fff"/><circle cx="11" cy="11" r="4" fill="#4285f4"/></svg></div>
  <div class="tbi run"><svg viewBox="0 0 22 22"><ellipse cx="11" cy="11" rx="10.500" ry="11" fill="#1f5fe0"/><text x="11" y="12.500" text-anchor="middle" font-size="5" fill="#cfe0ff" font-family="Liberation Sans">zoom</text></svg></div>
  <div class="tbi run"><svg viewBox="0 0 22 22"><path d="M7 2h13a1 1 0 0 1 1 1v16a1 1 0 0 1-1 1H7z" fill="#21a366"/><path d="M14 2h7v6h-7zM14 14h7v6h-7z" fill="#33c481"/><rect x="1" y="6" width="11" height="11" rx="1" fill="#107c41"/><path d="M4 8.500l4.500 6M8.500 8.500l-4.500 6" stroke="#fff" stroke-width="1.400"/></svg></div>
  <div class="tbi"><svg viewBox="0 0 22 22"><path d="M2 2l13 2v11L2 13z" fill="#2d4fb3"/><path d="M4 4l9 1.500v7L4 11z" fill="#8eb4ee"/><circle cx="15" cy="16" r="5" fill="#cfd3d8" stroke="#666"/><path d="M13 18l4-4" stroke="#444"/></svg></div>
  <div class="tbi run"><svg viewBox="0 0 22 22"><path d="M1 3h8l2 3h10v14H1z" fill="#f9c83e"/><rect x="5" y="14" width="12" height="6" fill="#2788d8"/></svg></div>
  <div class="tbi"><svg viewBox="0 0 22 22"><rect x="2" y="4" width="16" height="17" fill="#f2f0d8" stroke="#7ca43c"/><path d="M5 17v-5M8 17v-8M11 17v-3" stroke="#555" stroke-width="1.500"/><path d="M2 17h16v4H2z" fill="#6faf3a"/><path d="M14 13L20 2" stroke="#c49a2a" stroke-width="2"/></svg></div>
  <div class="tbi"><svg viewBox="0 0 22 22"><circle cx="11" cy="11" r="10" fill="#1a9fe0"/><text x="11" y="16" text-anchor="middle" font-size="14" font-weight="700" fill="#fff" font-family="Liberation Sans">S</text></svg></div>
  <div class="tbi"><svg viewBox="0 0 22 22"><circle cx="11" cy="11" r="10.500" fill="#1b7fc4"/><path d="M1 10a10 10 0 0 1 20 1c0 3-3 4-5 4H9c4 2 8 3 10 1a10 10 0 0 1-18-6z" fill="#39c1a8"/><path d="M7 11a5 4 0 0 1 9 1H9c-1 0-2 0-2-1z" fill="#fff"/></svg></div>
  <div class="tbi run"><svg viewBox="0 0 22 22"><circle cx="10" cy="12" r="9" fill="#2fc957"/><path d="M6 8c0 5 3 8 8 8l1-2-3-1-1 1c-1-1-2-2-2-3l1-1-1-3z" fill="#fff"/></svg><span class="bdg">7</span></div>
  <div class="tbi run"><svg viewBox="0 0 22 22"><rect x="4" y="2" width="14" height="18" fill="#3aa0e4"/><path d="M6 7h10M6 10h10M6 13h10M6 16h10" stroke="#fff"/><path d="M4 20h14v2H4z" fill="#6b3f25"/></svg></div>
  <div class="tbi run"><svg viewBox="0 0 22 22"><path d="M2 2h11v9" fill="none" stroke="#d2312f" stroke-width="2" stroke-dasharray="2 1.500"/><path d="M2 3v14h8" fill="none" stroke="#eee" stroke-width="2"/><path d="M11 11l2 9M14 12l-4 8" stroke="#3e9ad6" stroke-width="1.600"/><circle cx="17" cy="12" r="2" fill="#3e9ad6"/></svg></div>
  <div class="tray d-flex align-items-center">
    <div class="tr-i"><svg viewBox="0 0 16 16"><path d="M2.500 11L8 5.500l5.500 5.500" fill="none" stroke="#222" stroke-width="1.400"/></svg></div>
    <div class="tr-i ms-2"><svg viewBox="0 0 16 16"><path d="M3 8a5 5 0 0 1 8-4l1-1v4H8l1.500-1.500A3.500 3.500 0 0 0 4.500 8zM4 13v-4l3 3z" fill="#333"/><circle cx="11" cy="11" r="3.500" fill="#f2a33a"/></svg></div>
    <div class="tr-i ms-2"><svg viewBox="0 0 16 16"><rect x="5.500" y="1" width="5" height="9" rx="2.500" fill="none" stroke="#444"/><path d="M3.500 8a4.500 4.500 0 0 0 9 0M8 12.500V15" fill="none" stroke="#444"/></svg></div>
    <div class="lang">ENG<br>US</div>
    <div class="tr-i"><svg viewBox="0 0 16 16"><path d="M1 6a10 10 0 0 1 14 0M3.500 8.500a6.500 6.500 0 0 1 9 0M6 11a3 3 0 0 1 4 0" fill="none" stroke="#222" stroke-width="1.100"/><circle cx="8" cy="13" r="1" fill="#222"/></svg></div>
    <div class="tr-i spk"><svg viewBox="0 0 16 16"><path d="M2 6h2.500L8 3v10L4.500 10H2zM10 6q1.500 2 0 4M12 4q3 4 0 8" fill="none" stroke="#222"/></svg></div>
    <div class="tr-i bat"><svg viewBox="0 0 16 16"><rect x="5" y="4" width="9" height="8" rx="1" fill="#222"/><path d="M1 3h3v3H1zM2 6v3h3" fill="none" stroke="#222"/></svg></div>
    <div class="clock">1:59 AM<br>12/30/2022</div>
    <div class="notif">4</div>
  </div>
</div>
</body>
</html>
